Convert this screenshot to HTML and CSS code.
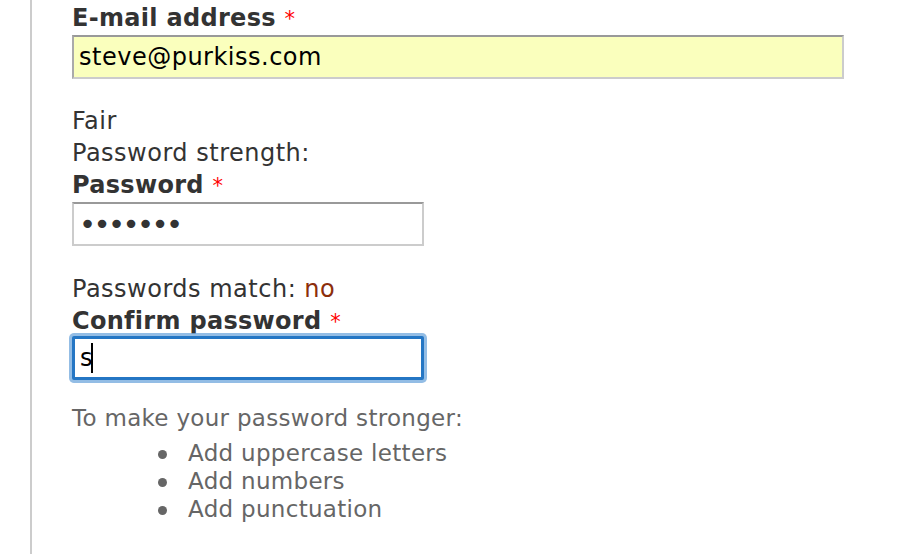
FILE: index.html
```html
<!DOCTYPE html>
<html lang="en">
<head>
<meta charset="utf-8">
<title>Account</title>
<link rel="stylesheet" href="styles.css">
</head>
<body>
<div class="page">
  <div class="form-item email-item">
    <label class="label" for="mail">E-mail address <span class="req">*</span></label>
    <input class="text-input email" id="mail" type="text" value="steve@purkiss.com">
  </div>

  <div class="strength">
    <div class="line">Fair</div>
    <div class="line">Password strength:</div>
  </div>
  <div class="form-item">
    <label class="label" for="pass">Password <span class="req">*</span></label>
    <input class="text-input short pass" id="pass" type="password" value="abcdefg">
  </div>

  <div class="match line">Passwords match: <span class="error">no</span></div>
  <div class="form-item">
    <label class="label" for="pass2">Confirm password <span class="req">*</span></label>
    <div class="confirm-wrap">
      <input class="text-input short focused" id="pass2" type="text" value="s">
      <span class="caret"></span>
    </div>
  </div>

  <div class="suggestions">
    <div class="line">To make your password stronger:</div>
    <ul class="tips">
      <li>Add uppercase letters</li>
      <li>Add numbers</li>
      <li>Add punctuation</li>
    </ul>
  </div>
</div>
</body>
</html>
```

FILE: styles.css
```css
html, body {
  margin: 0;
  padding: 0;
  background: #fff;
}

body {
  font-family: "DejaVu Sans", "Liberation Sans", sans-serif;
  font-size: 24px;
  letter-spacing: 0.5px;
  color: #333;
}

.page {
  margin-left: 30px;
  border-left: 2px solid #ccc;
  padding: 2px 0 0 40px;
  min-height: 552px;
}

.label {
  display: block;
  font-weight: bold;
  line-height: 32px;
  color: #333;
  letter-spacing: 0.3px;
}

.req {
  color: #f00;
  font-weight: normal;
  font-size: 21px;
}

.line {
  line-height: 32px;
}

.text-input {
  display: block;
  box-sizing: border-box;
  height: 44px;
  margin: 0;
  padding: 0 5px;
  border: 2px solid #ccc;
  border-top-color: #999;
  border-radius: 0;
  background: #fff;
  font-family: "DejaVu Sans", "Liberation Sans", sans-serif;
  font-size: 24px;
  letter-spacing: 0.5px;
  color: #000;
  outline: none;
}

.email {
  width: 772px;
  background: #faffbd;
  border-left-color: #aaa;
}

.short {
  width: 352px;
}

.pass {
  color: #333;
  padding-left: 5px;
  font-size: 29px;
  letter-spacing: -2.6px;
}

.email-item {
  margin-bottom: 26px;
}

.match {
  margin-top: 27px;
}

.error {
  color: #8c2e0b;
}

.confirm-wrap {
  position: relative;
  margin-top: -2px;
  width: 352px;
}

.focused {
  border: 3px solid #2476c4;
  border-radius: 2px;
  padding-left: 5px;
  box-shadow: 0 0 0 3px rgba(120, 172, 222, 0.8);
}

.caret {
  position: absolute;
  left: 19px;
  top: 7px;
  width: 2px;
  height: 30px;
  background: #000;
}

.suggestions {
  margin-top: 22px;
  color: #666;
  font-size: 23px;
  letter-spacing: 0.3px;
}

.tips {
  list-style: none;
  margin: 5px 0 0;
  padding: 0 0 0 116px;
}

.tips li {
  line-height: 28px;
}

.tips li::before {
  content: "";
  display: inline-block;
  width: 9px;
  height: 9px;
  border-radius: 50%;
  background: #666;
  vertical-align: middle;
  margin-left: -30.5px;
  margin-right: 21.5px;
}
```
